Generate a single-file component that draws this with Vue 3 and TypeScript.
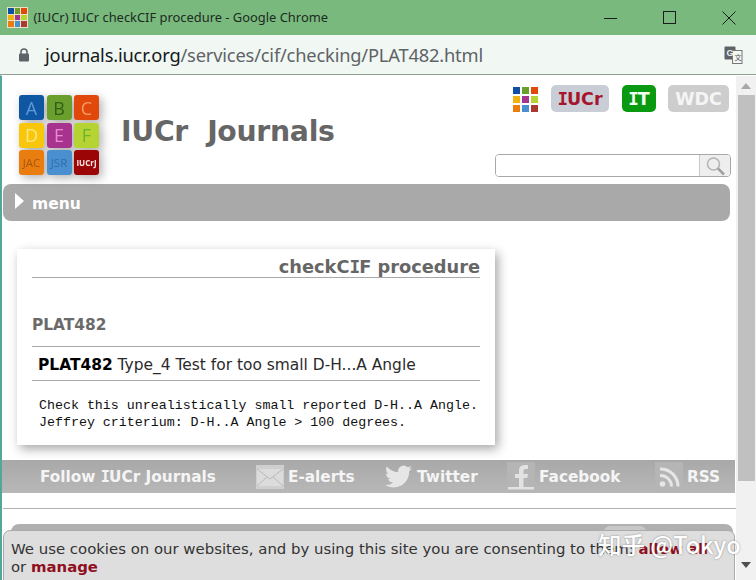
<script setup lang="ts">
const tiles = [
  { t: 'A', bg: '#0f56a3', c: '#5f9ad8', s: 'big' },
  { t: 'B', bg: '#6a9f2d', c: '#2f5f1b', s: 'big' },
  { t: 'C', bg: '#e0480c', c: '#f79a63', s: 'big' },
  { t: 'D', bg: '#f8c70b', c: '#fde684', s: 'big' },
  { t: 'E', bg: '#a8338f', c: '#e88cd2', s: 'big' },
  { t: 'F', bg: '#b6d334', c: '#6cb52a', s: 'big' },
  { t: 'JAC', bg: '#ea7d10', c: '#a8560e', s: 'small' },
  { t: 'JSR', bg: '#4a90d0', c: '#2f6ea8', s: 'small' },
  { t: 'IUCrJ', bg: '#9c0505', c: '#ffe8e8', s: 'tiny' },
]
const squares = ['#0f4ea3', '#6a9f2d', '#e0480c', '#f3b10f', '#a8338f', '#b6d334', '#ea7d10', '#4a90d0', '#a93a32']
</script>

<template>
  <div class="window">
    <div class="titlebar">
      <div class="favicon">
        <i v-for="c in squares" :key="c" :style="{ background: c }"></i>
      </div>
      <span class="title">(IUCr) IUCr checkCIF procedure - Google Chrome</span>
      <div class="winbtns">
        <svg width="14" height="14" viewBox="0 0 14 14"><path d="M0 7.5h13" stroke="#1c1c1c" stroke-width="1" /></svg>
        <svg width="14" height="14" viewBox="0 0 14 14"><rect x="0.5" y="0.5" width="12" height="12" fill="none" stroke="#1c1c1c" /></svg>
        <svg width="14" height="14" viewBox="0 0 14 14"><path d="M0.5 0.5l13 13M13.5 0.5l-13 13" stroke="#1c1c1c" /></svg>
      </div>
    </div>
    <div class="addressbar">
      <svg class="lock" width="12" height="14" viewBox="0 0 12 14">
        <path d="M3 6V4a3 3 0 0 1 6 0v2" fill="none" stroke="#5f6368" stroke-width="1.5" />
        <rect x="1" y="5.500" width="10" height="8" rx="1" fill="#5f6368" />
      </svg>
      <span class="url"><span class="host">journals.iucr.org</span>/services/cif/checking/PLAT482.html</span>
      <svg class="translate" width="19" height="18" viewBox="0 0 19 18">
        <rect x="0.500" y="0.500" width="11" height="13" rx="1" fill="#5f6368" />
        <rect x="8.500" y="4.500" width="9.500" height="13" fill="#f4f8f5" stroke="#777" />
        <text x="2.500" y="10" class="tg">G</text>
        <text x="10.500" y="14" class="tk">文</text>
      </svg>
    </div>
    <div class="viewport">
      <div class="page">
        <header class="header">
          <div class="logo">
            <div v-for="tile in tiles" :key="tile.t" class="tile" :class="tile.s" :style="{ background: tile.bg, color: tile.c }">{{ tile.t }}</div>
          </div>
          <h1 class="brand">IUCr&nbsp; Journals</h1>
          <div class="tools">
            <div class="links">
              <div class="grid"><i v-for="c in squares" :key="c" :style="{ background: c }"></i></div>
              <span class="pill iucr"><span class="slab">I</span>UCr</span>
              <span class="pill it"><span class="slab">I</span>T</span>
              <span class="pill wdc">WDC</span>
            </div>
            <div class="search">
              <div class="field"></div>
              <div class="go">
                <svg width="24" height="22" viewBox="0 0 24 22">
                  <circle cx="10.500" cy="9" r="6" fill="none" stroke="#b4b4b4" stroke-width="1.500" />
                  <path d="M15 13.500l6 6" stroke="#a0a0a0" stroke-width="2.500" />
                </svg>
              </div>
            </div>
          </div>
        </header>
        <nav class="menu"><span class="tri"></span>menu</nav>
        <section class="card">
          <h2>checkC<span class="slab">I</span>F procedure</h2>
          <h3>PLAT482</h3>
          <div class="entry"><b>PLAT482</b> Type_4 Test for too small D-H...A Angle</div>
          <pre class="detail">Check this unrealistically small reported D-H..A Angle.
Jeffrey criterium: D-H..A Angle &gt; 100 degrees.</pre>
        </section>
        <div class="follow">
          <span class="lead">Follow <span class="slab">I</span>UCr Journals</span>
          <svg class="ico mail" width="28" height="24" viewBox="0 0 28 24">
            <rect width="28" height="24" fill="#cfcfcf" />
            <rect x="1" y="4" width="26" height="17" fill="#dcdcdc" />
            <path d="M1 4l13 10L27 4M1 21l10-9M27 21l-10-9" fill="none" stroke="#b9b9b9" />
          </svg>
          <span class="lbl l1">E-alerts</span>
          <svg class="ico bird" width="29" height="27" viewBox="0 0 24 24">
            <path fill="#e6e6e6" d="M23.950 4.570a10 10 0 0 1-2.820.770 4.960 4.960 0 0 0 2.160-2.720c-.950.550-2 .950-3.130 1.180a4.920 4.920 0 0 0-8.380 4.480C7.690 8.100 4.070 6.130 1.640 3.160a4.820 4.820 0 0 0-.660 2.470c0 1.710.870 3.210 2.190 4.100a4.900 4.900 0 0 1-2.230-.620v.060a4.920 4.920 0 0 0 3.950 4.830 5 5 0 0 1-2.210.080 4.940 4.940 0 0 0 4.610 3.420A9.870 9.870 0 0 1 0 19.540a13.940 13.940 0 0 0 7.550 2.210c9.060 0 14-7.500 14-13.990 0-.210 0-.420-.020-.630a9.940 9.940 0 0 0 2.420-2.560z" />
          </svg>
          <span class="lbl l2">Twitter</span>
          <svg class="ico fb" width="28" height="30" viewBox="0 0 28 30">
            <rect width="28" height="30" fill="#b5b5b5" />
            <path fill="#e2e2e2" d="M12 27V16H8v-4h4V8.500C12 4.500 14.500 3 18 3c1.500 0 2.500.100 3 .200V7h-2.200C17 7 16.500 8 16.500 9.500V12H21l-.700 4h-3.800v11z" />
            <rect x="1" y="25" width="26" height="2.500" fill="#e2e2e2" />
          </svg>
          <span class="lbl l3">Facebook</span>
          <svg class="ico rss" width="28" height="30" viewBox="0 0 28 30">
            <rect width="28" height="30" fill="#b5b5b5" />
            <circle cx="7.500" cy="22" r="2.800" fill="#e6e6e6" />
            <path d="M5 13.500a11 11 0 0 1 11.500 11M5 7a17.500 17.500 0 0 1 18 17.500" fill="none" stroke="#e6e6e6" stroke-width="3" />
          </svg>
          <span class="lbl l4">RSS</span>
        </div>
        <hr class="rule" />
        <div class="below"><span class="tab"></span></div>
      </div>
      <aside class="scrollbar">
        <span class="up"></span>
        <span class="thumb"></span>
        <span class="down"></span>
      </aside>
    </div>
    <div class="cookies">
      We use cookies on our websites, and by using this site you are consenting to them: <a>allow all</a><br />or <a>manage</a>
    </div>
    <div class="watermark">知乎 @Tokyo</div>
  </div>
</template>

<style>
html, body { margin: 0; background: #fff; }
</style>

<style scoped>
.window {
  position: relative;
  width: 756px;
  height: 580px;
  overflow: hidden;
  display: flex;
  flex-direction: column;
  font-family: "DejaVu Sans", sans-serif;
  background: #fff;
}
.slab { font-family: "DejaVu Sans Mono", monospace; letter-spacing: -0.060em; }
.titlebar {
  height: 35px;
  flex: none;
  background: #79b97e;
  display: flex;
  align-items: center;
  padding-left: 7px;
  box-sizing: border-box;
}
.favicon {
  display: grid;
  grid-template-columns: repeat(3, 5.500px);
  grid-auto-rows: 5.500px;
  gap: 1px;
  background: #e9e3c5;
  padding: 1px;
  margin-right: 6px;
}
.title {
  font: 12.900px "Noto Sans", sans-serif;
  color: #1d2b1f;
  margin-top: -2px;
}
.winbtns {
  margin-left: auto;
  display: flex;
  gap: 45px;
  margin-right: 20px;
}
.addressbar {
  height: 40px;
  flex: none;
  box-sizing: border-box;
  background: #f1f7f2;
  display: flex;
  align-items: center;
  padding-left: 18px;
  border-bottom: 1px solid #8fa295;
}
.url {
  margin-left: 15px;
  font: 18.300px "Noto Sans", sans-serif;
  color: #5f6368;
  letter-spacing: -0.180px;
}
.host { color: #15181b; }
.translate { margin-left: auto; margin-right: 13px; }
.tg { font: bold 9px "Liberation Sans", sans-serif; fill: #f0f0f0; }
.tk { font: 7px "Noto Sans CJK SC", sans-serif; fill: #555; }
.viewport {
  height: 505px;
  flex: none;
  display: flex;
  border-top: 1px solid #ffffff;
  border-left: 2px solid #4fa89a;
  box-sizing: border-box;
}
.page {
  width: 734px;
  flex: none;
  box-sizing: border-box;
  padding-left: 1px;
  overflow: hidden;
}
.header {
  height: 108px;
  display: flex;
  box-sizing: border-box;
  padding: 19px 5px 0 16px;
}
.logo {
  display: grid;
  grid-template-columns: repeat(3, 25px);
  grid-auto-rows: 25px;
  width: 80px;
  height: 80px;
  column-gap: 2.500px;
  row-gap: 2.500px;
  filter: drop-shadow(3px 3px 5px rgba(0, 0, 0, .3));
}
.tile {
  border-radius: 3px;
  display: flex;
  align-items: center;
  justify-content: center;
  font-family: "Open Sans", sans-serif;
}
.big { font-size: 18px; }
.small { font-size: 11.500px; }
.tiny { font-size: 8px; font-weight: 700; }
.brand {
  margin: 20px 0 0 22px;
  font: bold 28.300px "DejaVu Sans", sans-serif;
  color: #666;
  white-space: nowrap;
  letter-spacing: -0.300px;
}
.tools {
  margin-left: auto;
  margin-top: -10px;
  display: flex;
  flex-direction: column;
  align-items: flex-end;
}
.links {
  display: flex;
  align-items: center;
  height: 27px;
  padding-right: 2px;
}
.grid {
  display: grid;
  grid-template-columns: repeat(3, 7px);
  grid-auto-rows: 7px;
  gap: 2px;
  margin: 2px 13px 0 0;
}
.pill {
  height: 27px;
  border-radius: 5px;
  display: flex;
  align-items: center;
  justify-content: center;
  font: bold 17.500px "DejaVu Sans", sans-serif;
  box-sizing: border-box;
}
.iucr { width: 58px; background: #c9ced6; color: #a5152d; }
.it { width: 34px; background: #0a9a12; color: #f2fff2; margin-left: 13px; }
.wdc { width: 61px; background: #cdcdcd; color: #f5f5f5; margin-left: 12px; }
.search {
  margin-top: 42px;
  display: flex;
  width: 236px;
  height: 23px;
  border: 1px solid #a8a8a8;
  border-radius: 4px;
  box-sizing: border-box;
  overflow: hidden;
}
.field { flex: 1; background: #fff; }
.go {
  width: 30px;
  background: #eeeeee;
  border-left: 1px solid #c8c8c8;
  display: flex;
  align-items: center;
  justify-content: center;
}
.menu {
  height: 37px;
  width: 727px;
  background: #a9a9a9;
  border-radius: 8px;
  display: flex;
  align-items: center;
  color: #fff;
  font-weight: 700;
  font-size: 15.500px;
  box-sizing: border-box;
  padding: 2px 0 0 12px;
}
.tri {
  width: 0;
  height: 0;
  border-left: 9px solid #fff;
  border-top: 8px solid transparent;
  border-bottom: 8px solid transparent;
  margin-right: 8px;
  margin-top: -5px;
}
.card {
  margin: 28px 0 0 14px;
  width: 478px;
  height: 196px;
  box-sizing: border-box;
  padding: 0 15px;
  background: #fff;
  box-shadow: 3px 4px 10px rgba(0, 0, 0, .35);
  overflow: hidden;
}
.card h2 {
  margin: 0;
  height: 28px;
  line-height: 36px;
  text-align: right;
  font-size: 17.800px;
  font-weight: 700;
  color: #666;
  border-bottom: 1px solid #a8a8a8;
}
.card h3 {
  margin: 37px 0 0;
  height: 31px;
  line-height: 20px;
  font-size: 15.400px;
  font-weight: 700;
  color: #6a6a6a;
}
.entry {
  border-top: 1px solid #a8a8a8;
  border-bottom: 1px solid #a8a8a8;
  height: 35px;
  box-sizing: border-box;
  line-height: 36px;
  padding-left: 6px;
  font-size: 15.450px;
  color: #2a2a2a;
  white-space: nowrap;
}
.entry b { color: #000; }
.detail {
  margin: 16px 0 0 7px;
  font: 13.300px/17px "Liberation Mono", monospace;
  color: #111;
}
.follow {
  margin-top: 15px;
  width: 733px;
  margin-left: -1px;
  height: 33px;
  background: linear-gradient(#a8a8a8, #b8b8b8);
  display: flex;
  align-items: center;
  color: #f5f5f5;
  font-weight: 700;
  font-size: 15.300px;
  box-sizing: border-box;
  padding-left: 38px;
  white-space: nowrap;
  overflow: hidden;
}
.lead { width: 216px; }
.ico { flex: none; }
.lbl { margin-left: 4px; }
.l1 { width: 96px; }
.l2 { width: 90px; }
.l3 { width: 116px; }
.rule {
  margin: 15px 0 0;
  width: 733px;
  border: 0;
  border-top: 1px solid #b0b0b0;
}
.below {
  margin: 15px 0 0 8px;
  width: 722px;
  height: 40px;
  background: #b0b0b0;
  border-radius: 8px 8px 0 0;
  position: relative;
}
.tab {
  position: absolute;
  right: 87px;
  top: 2px;
  width: 42px;
  height: 6px;
  border-radius: 6px 6px 0 0;
  background: #c8c8c8;
}
.scrollbar {
  width: 20px;
  flex: none;
  background: #f1f1f1;
  display: flex;
  flex-direction: column;
  align-items: center;
  padding-top: 7px;
  box-sizing: border-box;
}
.up, .down {
  width: 0;
  height: 0;
  border-left: 5px solid transparent;
  border-right: 5px solid transparent;
  flex: none;
}
.up { border-bottom: 6px solid #a8a8a8; }
.down { border-top: 6px solid #505050; margin-top: 81px; }
.thumb {
  width: 17px;
  height: 386px;
  margin-top: 6px;
  background: #c0c0c0;
  flex: none;
}
.cookies {
  position: absolute;
  left: 3px;
  top: 530px;
  width: 732px;
  height: 52px;
  box-sizing: border-box;
  border: 1px solid #aaa;
  border-radius: 7px 7px 0 0;
  background: #dedede;
  padding: 9px 7px 0;
  font-size: 14.900px;
  line-height: 18px;
  color: #333;
  white-space: nowrap;
  overflow: hidden;
}
.cookies a { color: #8f0f1e; font-weight: 700; }
.watermark {
  position: absolute;
  left: 598px;
  top: 527px;
  font: 500 23.500px "Noto Sans CJK SC", sans-serif;
  color: #fff;
  text-shadow: 0 0 2px rgba(60, 60, 60, .55);
  white-space: nowrap;
}
</style>
